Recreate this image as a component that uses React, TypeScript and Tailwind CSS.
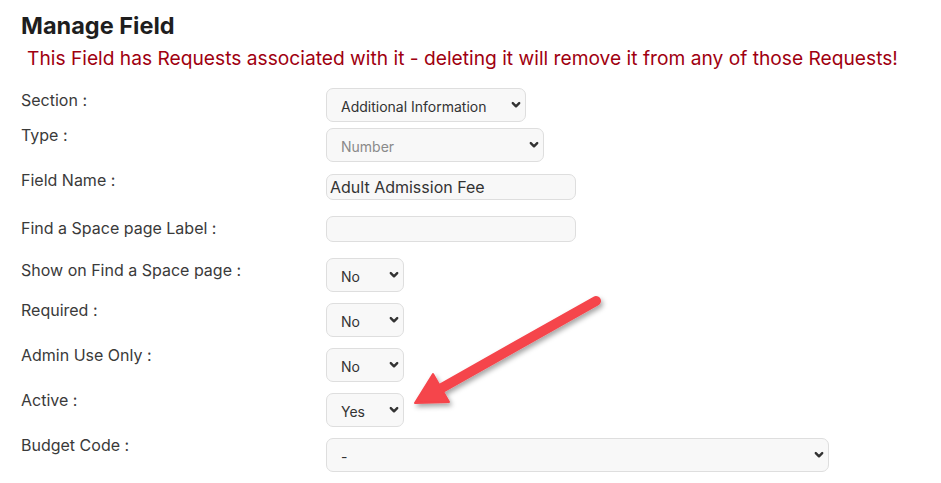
import React from "react";

const Chevron = () => (
  <svg width="10" height="7" viewBox="0 0 10 7" className="pointer-events-none absolute right-[5px] top-1/2 -translate-y-1/2">
    <path d="M1.8 1.6 L5 4.8 L8.2 1.6" fill="none" stroke="#333" strokeWidth="2.4" strokeLinecap="round" strokeLinejoin="round" />
  </svg>
);

function Select({ value, width, disabled }: { value: string; width: string; disabled?: boolean }) {
  return (
    <div className={`relative ${width} h-[34px]`}>
      <select
        disabled={disabled}
        defaultValue={value}
        className={`h-full w-full appearance-none rounded-[7px] border border-[#dedede] bg-[#f8f8f8] pl-[14px] pr-6 pt-[2px] text-[14px] outline-none ${disabled ? "text-[#8a8a8a]" : "text-[#333]"}`}
      >
        <option>{value}</option>
      </select>
      <Chevron />
    </div>
  );
}

function Row({ label, labelMt, ctrlMt, mt, children }: { label: string; labelMt: string; ctrlMt: string; mt: string; children: React.ReactNode }) {
  return (
    <div className={`flex items-start ${mt}`}>
      <div className={`w-[305px] shrink-0 text-[16px] leading-[20px] text-[#3a3a3a] ${labelMt}`}>{label}</div>
      <div className={ctrlMt}>{children}</div>
    </div>
  );
}

export default function App() {
  return (
    <div className="relative h-[483px] w-[941px] overflow-hidden bg-white px-[21px] pt-[10px]" style={{ fontFamily: "Inter, 'Noto Sans', sans-serif" }}>
      <h1 className="text-[23.5px] font-bold leading-[32px] text-[#1e1e1e]">Manage Field</h1>
      <p className="mt-[3px] pl-[6px] text-[19.2px] leading-[26px] text-[#a00010]">
        This Field has Requests associated with it - deleting it will remove it from any of those Requests!
      </p>

      <div className="flex flex-col">
        <Row label="Section :" mt="mt-[17px]" labelMt="mt-[2px]" ctrlMt="mt-0">
          <Select value="Additional Information" width="w-[200px]" />
        </Row>
        <Row label="Type :" mt="mt-[3px]" labelMt="mt-0" ctrlMt="mt-[3px]">
          <Select value="Number" width="w-[218px]" disabled />
        </Row>
        <Row label="Field Name :" mt="mt-[8px]" labelMt="mt-0" ctrlMt="mt-[4px]">
          <input
            defaultValue="Adult Admission Fee"
            className="h-[26px] w-[250px] rounded-[7px] border border-[#dedede] bg-[#f8f8f8] px-[3px] text-[16px] text-[#333] outline-none"
          />
        </Row>
        <Row label="Find a Space page Label :" mt="mt-[16px]" labelMt="mt-[2px]" ctrlMt="mt-0">
          <input className="h-[26px] w-[250px] rounded-[7px] border border-[#dedede] bg-[#f8f8f8] px-[3px] text-[16px] outline-none" />
        </Row>
        <Row label="Show on Find a Space page :" mt="mt-[16px]" labelMt="mt-[2px]" ctrlMt="mt-0">
          <Select value="No" width="w-[78px]" />
        </Row>
        <Row label="Required :" mt="mt-[8px]" labelMt="mt-0" ctrlMt="mt-[3px]">
          <Select value="No" width="w-[78px]" />
        </Row>
        <Row label="Admin Use Only :" mt="mt-[8px]" labelMt="mt-0" ctrlMt="mt-[3px]">
          <Select value="No" width="w-[78px]" />
        </Row>
        <Row label="Active :" mt="mt-[8px]" labelMt="mt-0" ctrlMt="mt-[3px]">
          <Select value="Yes" width="w-[78px]" />
        </Row>
        <Row label="Budget Code :" mt="mt-[8px]" labelMt="mt-0" ctrlMt="mt-[3px]">
          <Select value="-" width="w-[503px]" />
        </Row>
      </div>

      <svg className="pointer-events-none absolute left-0 top-0" width="941" height="483">
        <defs>
          <filter id="sh" x="-20%" y="-20%" width="140%" height="140%">
            <feDropShadow dx="2" dy="3" stdDeviation="2.5" floodColor="#000" floodOpacity="0.35" />
          </filter>
        </defs>
        <g filter="url(#sh)">
          <line x1="596" y1="301" x2="440" y2="389" stroke="#f5444b" strokeWidth="10" strokeLinecap="round" />
          <polygon points="415,403 433,374 449,402" fill="#f5444b" stroke="#f5444b" strokeWidth="2" strokeLinejoin="round" />
        </g>
      </svg>
    </div>
  );
}
